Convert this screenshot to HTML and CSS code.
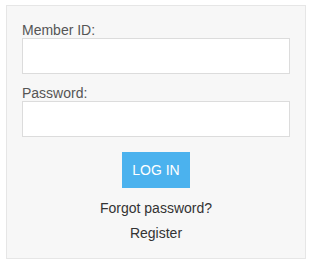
FILE: index.html
```html
<!DOCTYPE html>
<html lang="en">
<head>
  <meta charset="UTF-8">
  <meta name="viewport" content="width=device-width, initial-scale=1.0">
  <title>Member login</title>
  <link rel="stylesheet" href="styles.css">
</head>
<body>
  <form class="login_box" action="#">
    <label class="login_label" for="member_id">Member ID:</label>
    <input class="login_input" type="text" id="member_id">
    <label class="login_label pw" for="member_pw">Password:</label>
    <input class="login_input" type="password" id="member_pw">
    <div class="login_btn_wrap">
      <button class="login_btn" type="button">LOG IN</button>
    </div>
    <a class="login_link first" href="#">Forgot password?</a>
    <a class="login_link" href="#">Register</a>
  </form>
</body>
</html>
```

FILE: styles.css
```css
body{
  margin: 5px 6px;
  font-family: "Liberation Sans", Arial, sans-serif;
  font-size: 14px;
  color: #333;
}
.login_box{
  width: 298px;
  box-sizing: border-box;
  width: 300px;
  padding: 16px 15px 12px;
  background-color: #f7f7f7;
  border: 1px solid #e6e6e6;
  display: flex;
  flex-direction: column;
}
.login_label{
  display: block;
  line-height: 16px;
  color: #555;
}
.login_label.pw{margin-top: 11px;}
.login_input{
  display: block;
  box-sizing: border-box;
  width: 268px;height: 36px;
  margin: 0;
  border: 1px solid #dcdcdc;
  background-color: #fff;
  outline: none;
}
.login_btn_wrap{
  display: flex;
  justify-content: center;
  margin-top: 15px;
}
.login_btn{
  height: 36px;
  padding: 0 10px;
  border: none;
  background-color: #4bb2ee;
  color: #fff;
  font-family: inherit;
  font-size: 14px;
  line-height: 16px;
}
.login_link{
  text-align: center;
  color: #333;
  text-decoration: none;
  line-height: 25px;
}
.login_link.first{margin-top: 8px;}
```
